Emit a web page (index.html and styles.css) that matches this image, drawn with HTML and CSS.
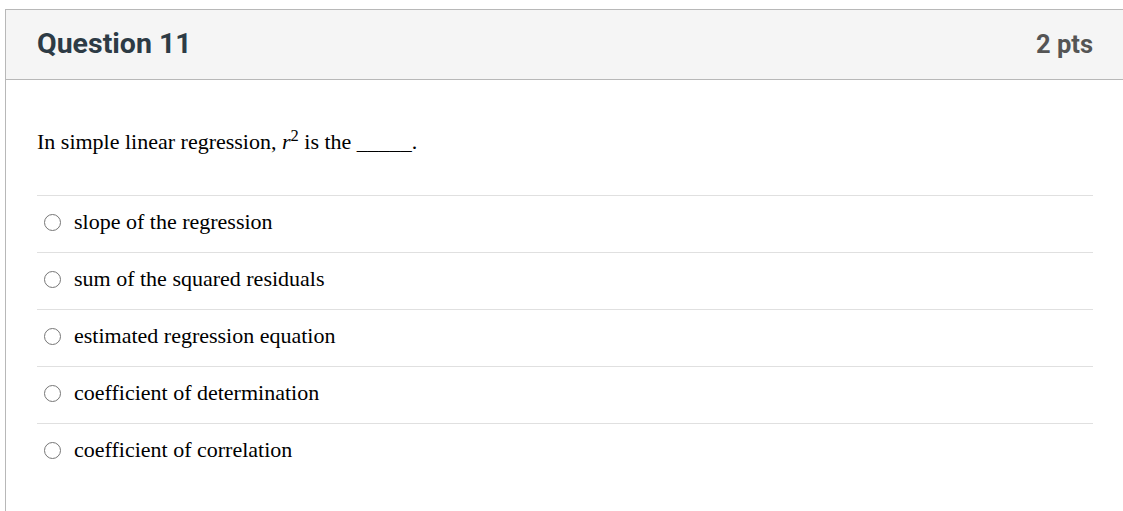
FILE: index.html
```html
<!DOCTYPE html>
<html>
<head>
<meta charset="utf-8">
<link rel="stylesheet" href="styles.css">
</head>
<body>
<div class="question">
  <div class="header">
    <span class="name">Question 11</span>
    <span class="points">2 pts</span>
  </div>
  <div class="content">
    <div class="text">In simple linear regression, <i>r</i><sup>2</sup> is the _____.</div>
    <div class="answers">
      <label class="answer"><span class="radio"></span><span>slope of the regression</span></label>
      <label class="answer"><span class="radio"></span><span>sum of the squared residuals</span></label>
      <label class="answer"><span class="radio"></span><span>estimated regression equation</span></label>
      <label class="answer"><span class="radio"></span><span>coefficient of determination</span></label>
      <label class="answer"><span class="radio"></span><span>coefficient of correlation</span></label>
    </div>
  </div>
</div>
</body>
</html>
```
FILE: styles.css
```css
html, body {
  margin: 0;
  padding: 0;
  background: #fff;
  overflow: hidden;
}
body {
  padding: 9px 0 0 5px;
}
.question {
  width: 1118px;
  border: 1px solid #b8b8b8;
  border-bottom: none;
  background: #fff;
  height: 520px;
}
.header {
  height: 69px;
  background: #f5f5f5;
  border-bottom: 1px solid #b8b8b8;
  display: flex;
  align-items: center;
  justify-content: space-between;
  padding: 0 31px;
  font-family: Roboto, "Liberation Sans", sans-serif;
  font-weight: 700;
}
.name {
  font-size: 28.5px;
  color: #2d3b45;
  margin-top: -2px;
}
.points {
  font-size: 25.5px;
  color: #555;
  margin-top: -1px;
}
.content {
  padding: 0 31px;
  font-family: "Liberation Serif", "Times New Roman", serif;
  font-size: 22px;
  color: #000;
}
.text {
  padding-top: 49px;
  height: 66px;
  line-height: 26px;
}
.text sup {
  font-size: 0.75em;
  line-height: 0;
}
.answers {
  display: flex;
  flex-direction: column;
}
.answer {
  display: flex;
  align-items: center;
  border-top: 1px solid #e0e0e0;
  padding-bottom: 4px;
  box-sizing: border-box;
  height: 57px;
}
.radio {
  width: 15px;
  height: 15px;
  border: 1.5px solid #767676;
  border-radius: 50%;
  margin: 0 13px 0 7px;
  flex: none;
}
```
